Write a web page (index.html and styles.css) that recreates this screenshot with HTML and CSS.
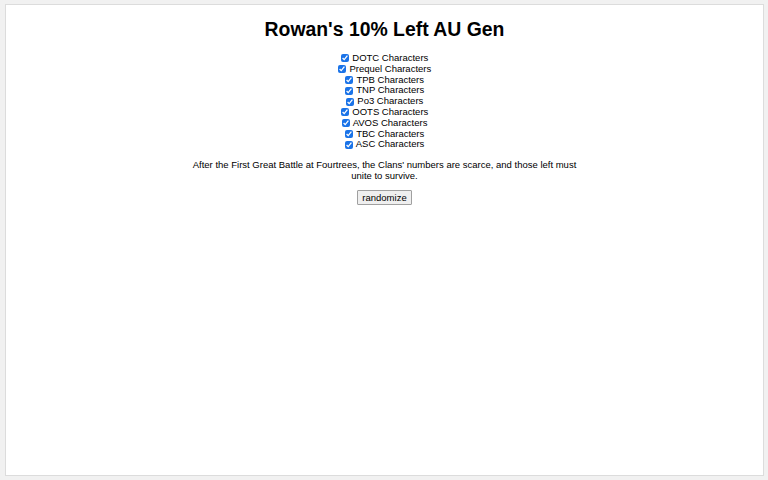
FILE: index.html
```html
<!DOCTYPE html>
<html lang="en">
<head>
<meta charset="utf-8">
<title>Rowan's 10% Left AU Gen</title>
<link rel="stylesheet" href="styles.css">
</head>
<body>
<main class="sheet">
  <h1 class="title">Rowan's 10% Left AU Gen</h1>
  <div class="options">
    <label class="opt"><input type="checkbox" checked> DOTC Characters</label>
    <label class="opt"><input type="checkbox" checked> Prequel Characters</label>
    <label class="opt"><input type="checkbox" checked> TPB Characters</label>
    <label class="opt"><input type="checkbox" checked> TNP Characters</label>
    <label class="opt"><input type="checkbox" checked> Po3 Characters</label>
    <label class="opt"><input type="checkbox" checked> OOTS Characters</label>
    <label class="opt"><input type="checkbox" checked> AVOS Characters</label>
    <label class="opt"><input type="checkbox" checked> TBC Characters</label>
    <label class="opt"><input type="checkbox" checked> ASC Characters</label>
  </div>
  <p class="story">After the First Great Battle at Fourtrees, the Clans' numbers are scarce, and those left must unite to survive.</p>
  <button class="go" type="button">randomize</button>
</main>
</body>
</html>
```
FILE: styles.css
```css
html, body {
  margin: 0;
  padding: 0;
}

body {
  background: #f1f1f1;
  font-family: "Liberation Sans", Arial, sans-serif;
  color: #000;
  padding: 4px 4px 4px 5px;
  height: 480px;
  box-sizing: border-box;
}

.sheet {
  background: #fff;
  border: 1px solid #dcdcdc;
  height: 100%;
  box-sizing: border-box;
  display: flex;
  flex-direction: column;
  align-items: center;
}

.title {
  font-size: 19.4px;
  font-weight: bold;
  margin: 13px 0 12px;
  line-height: 23px;
}

.options {
  display: flex;
  flex-direction: column;
  align-items: center;
  font-size: 9.5px;
  line-height: 10.8px;
}

.opt {
  display: flex;
  align-items: center;
  white-space: pre;
}

.opt input {
  width: 8px;
  height: 8px;
  margin: 0 1px 0 0;
  accent-color: #1a73e8;
}

.story {
  width: 392px;
  text-align: center;
  font-size: 9.5px;
  line-height: 11px;
  margin: 9px 0 9px;
}

.go {
  font-family: inherit;
  font-size: 9.5px;
  line-height: 11px;
  padding: 1px 4px;
  background: #efefef;
  border: 1px solid #a0a0a0;
  border-radius: 1px;
  color: #000;
}
```
